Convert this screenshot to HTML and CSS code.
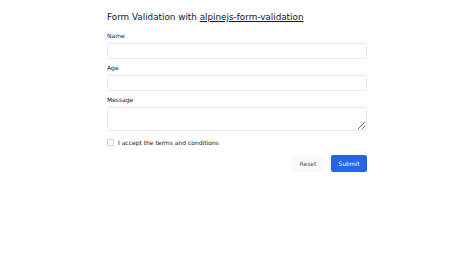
FILE: index.html
```html
<!DOCTYPE html>
<html lang="en">
<head>
    <meta charset="UTF-8">
    <meta name="viewport" content="width=device-width, initial-scale=1.0">
    <title>Form Validation</title>
    <link rel="stylesheet" href="styles.css">
</head>
<body>
    <div class="container">
        <h1 class="title">Form Validation with <a href="#">alpinejs-form-validation</a></h1>
        <form class="form">
            <div class="field">
                <label for="name">Name</label>
                <input type="text" id="name" class="input">
            </div>
            <div class="field">
                <label for="age">Age</label>
                <input type="text" id="age" class="input">
            </div>
            <div class="field">
                <label for="message">Message</label>
                <textarea id="message" class="input textarea"></textarea>
            </div>
            <label class="checkbox-row">
                <input type="checkbox" class="checkbox">
                <span>I accept the terms and conditions</span>
            </label>
            <div class="actions">
                <button type="reset" class="btn btn-reset">Reset</button>
                <button type="submit" class="btn btn-submit">Submit</button>
            </div>
        </form>
    </div>
</body>
</html>
```

FILE: styles.css
```css
body {
    margin: 0;
    font-family: "DejaVu Sans", sans-serif;
    background-color: white;
    color: #111827;
}

.container {
    width: 260px;
    margin: 0 auto;
    padding-top: 11px;
}

.title {
    font-size: 8.8px;
    font-weight: normal;
    margin: 0 0 8px;
    line-height: 13px;
}

.title a {
    color: inherit;
}

.form {
    display: flex;
    flex-direction: column;
}

.field {
    display: flex;
    flex-direction: column;
    margin-bottom: 5px;
}

.field label {
    font-size: 6px;
    line-height: 8px;
    margin-bottom: 3px;
}

.input {
    box-sizing: border-box;
    height: 16px;
    border: 1px solid #e5e7eb;
    border-radius: 2px;
    margin: 0;
    font-family: inherit;
    font-size: 6px;
}

.textarea {
    height: 24px;
    resize: vertical;
}

.checkbox-row {
    display: flex;
    align-items: center;
    font-size: 6px;
    margin-top: 3px;
}

.checkbox {
    appearance: none;
    box-sizing: border-box;
    width: 7px;
    height: 7px;
    margin: 0 4px 0 0;
    border: 1px solid #d1d5db;
    border-radius: 1px;
}

.actions {
    display: flex;
    justify-content: flex-end;
    gap: 6px;
    margin-top: 9px;
}

.btn {
    height: 17px;
    border: none;
    border-radius: 2px;
    font-family: inherit;
    font-size: 6px;
    cursor: pointer;
}

.btn-reset {
    width: 34px;
    background-color: #f9fafb;
    color: #4b5563;
}

.btn-submit {
    width: 36px;
    background-color: #2563eb;
    color: white;
}
```
